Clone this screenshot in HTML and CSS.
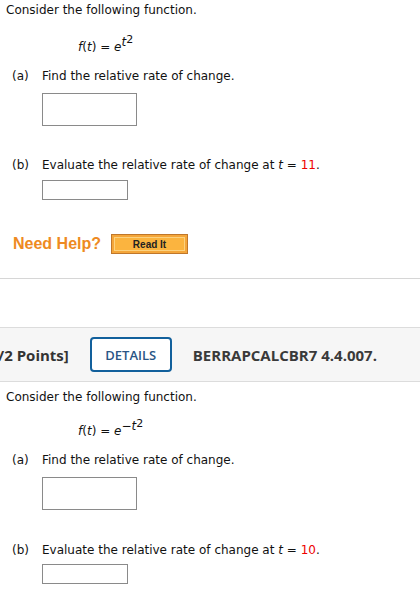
FILE: index.html
```html
<!DOCTYPE html>
<html>
<head>
<meta charset="utf-8">
<link rel="stylesheet" href="styles.css">
</head>
<body>
<div class="q">
  <p class="intro">Consider the following function.</p>
  <p class="func"><i>f</i>(<i>t</i>) = <i>e</i><sup><i>t</i><sup class="sq">2</sup></sup></p>
  <div class="part">
    <span class="lbl">(a)</span><span>Find the relative rate of change.</span>
  </div>
  <div class="ans big"></div>
  <div class="part pb">
    <span class="lbl">(b)</span><span>Evaluate the relative rate of change at <i>t</i> = <span class="red">11</span>.</span>
  </div>
  <div class="ans small"></div>
  <div class="help">
    <span class="need">Need Help?</span>
    <span class="readit"><span>Read It</span></span>
  </div>
</div>
<div class="sep"></div>
<div class="hdr">
  <span class="pts">/2 Points]</span>
  <span class="details">DETAILS</span>
  <span class="code">BERRAPCALCBR7 4.4.007.</span>
</div>
<div class="q q2">
  <p class="intro">Consider the following function.</p>
  <p class="func"><i>f</i>(<i>t</i>) = <i>e</i><sup>&minus;<i>t</i><sup class="sq">2</sup></sup></p>
  <div class="part">
    <span class="lbl">(a)</span><span>Find the relative rate of change.</span>
  </div>
  <div class="ans big"></div>
  <div class="part pb2">
    <span class="lbl">(b)</span><span>Evaluate the relative rate of change at <i>t</i> = <span class="red">10</span>.</span>
  </div>
  <div class="ans small s2"></div>
</div>
</body>
</html>
```
FILE: styles.css
```css
html, body { margin: 0; padding: 0; background: #fff; }
body {
  font-family: "DejaVu Sans", Verdana, sans-serif;
  font-size: 12px;
  color: #111;
  width: 420px;
  overflow: hidden;
}
p { margin: 0; }
.q { padding-left: 6px; }
.intro { line-height: 18px; padding-top: 1px; }
.func { margin: 18px 0 0 72px; line-height: 20px; }
.func i { font-style: italic; }
.func sup { font-size: 12px; vertical-align: 5px; line-height: 0; }
.func sup .sq { font-size: 11px; vertical-align: 3px; }
.part { display: flex; margin-top: 10px; line-height: 18px; padding-left: 6px; }
.part .lbl { width: 30px; }
.part i { font-style: italic; }
.red { color: #e00; }
.ans { margin-left: 36px; border: 1px solid #8a8a8a; background: #fff; box-sizing: border-box; }
.ans.big { width: 95px; height: 33px; margin-top: 8px; }
.ans.small { width: 86px; height: 20px; margin-top: 6px; }
.pb { margin-top: 30px; }
.help { display: flex; align-items: center; margin-top: 34px; padding-left: 7px; }
.need {
  font-family: "Liberation Sans", Arial, sans-serif;
  font-weight: bold; font-size: 16px; color: #ee8a22;
}
.readit {
  margin-left: 10px;
  width: 77px; height: 20px; box-sizing: border-box;
  border: 1px solid #c0772a; background: #f4a63a;
  padding: 2px;
  display: flex;
}
.readit span {
  flex: 1;
  border: 1px solid #fcd27f;
  background: #fbb43f;
  font-family: "Liberation Sans", Arial, sans-serif;
  font-weight: bold; font-size: 10px; color: #222;
  display: flex; align-items: center; justify-content: center;
}
.sep { height: 1px; background: #d6d6d6; margin-top: 24px; }
.hdr {
  margin-top: 48px;
  height: 53px;
  background: #f6f6f6;
  border-top: 1px solid #dcdcdc;
  border-bottom: 1px solid #dcdcdc;
  display: flex; align-items: center;
  font-family: "Open Sans", sans-serif;
  color: #333;
}
.pts { font-weight: bold; font-size: 15px; margin-left: -2px; white-space: nowrap; }
.details {
  margin-left: 21px;
  width: 82px; height: 35px; box-sizing: border-box;
  border: 2px solid #12609c; border-radius: 4px;
  display: flex; align-items: center; justify-content: center;
  font-weight: 600; font-size: 13px; color: #2a5685; background: #fff;
}
.code { margin-left: 21px; font-weight: bold; font-size: 15px; color: #3a3a3a; }
.q2 .intro { padding-top: 6px; }
.q2 .func { margin-top: 15px; }
.pb2 { margin-top: 31px; }
.ans.s2 { margin-top: 5px; }
```
